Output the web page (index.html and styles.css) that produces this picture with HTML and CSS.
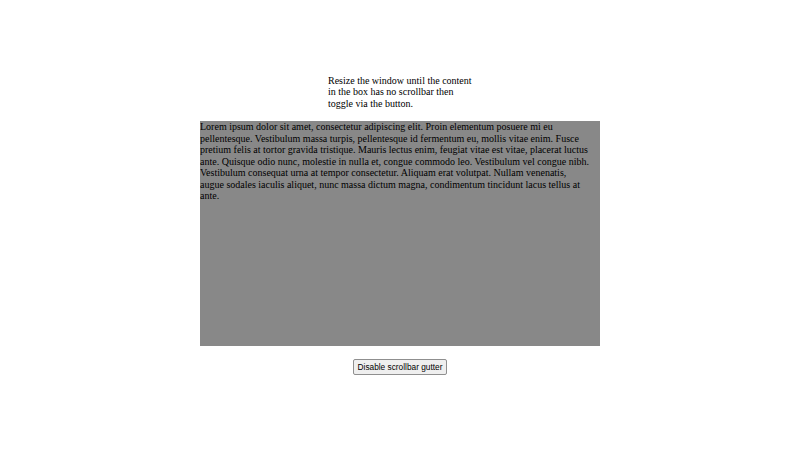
FILE: index.html
```html
<!DOCTYPE html>
<html>
<head>
<meta charset="utf-8">
<link rel="stylesheet" href="styles.css">
</head>
<body>
<main class="page">
  <p class="intro">Resize the window until the content in the box has no scrollbar then toggle via the button.</p>
  <div class="box">Lorem ipsum dolor sit amet, consectetur adipiscing elit. Proin elementum posuere mi eu pellentesque. Vestibulum massa turpis, pellentesque id fermentum eu, mollis vitae enim. Fusce pretium felis at tortor gravida tristique. Mauris lectus enim, feugiat vitae est vitae, placerat luctus ante. Quisque odio nunc, molestie in nulla et, congue commodo leo. Vestibulum vel congue nibh. Vestibulum consequat urna at tempor consectetur. Aliquam erat volutpat. Nullam venenatis, augue sodales iaculis aliquet, nunc massa dictum magna, condimentum tincidunt lacus tellus at ante.</div>
  <button class="toggle" type="button">Disable scrollbar gutter</button>
</main>
</body>
</html>
```
FILE: styles.css
```css
html, body {
  margin: 0;
  padding: 0;
  background: #fff;
}
.page {
  height: 450px;
  display: flex;
  flex-direction: column;
  align-items: center;
  justify-content: center;
  font-family: "Liberation Serif", "Times New Roman", serif;
  font-size: 10px;
  line-height: 11.5px;
  color: #000;
}
.intro {
  width: 144px;
  margin: 0 0 12px;
}
.box {
  width: 400px;
  height: 225px;
  background: #888888;
  overflow-y: auto;
  padding-right: 9px;
  box-sizing: border-box;
}
.toggle {
  margin-top: 13px;
  font-family: "Liberation Sans", Arial, sans-serif;
  font-size: 8.3px;
  height: 16px;
  padding: 0 4px;
  border: 1px solid #8f8f8f;
  border-radius: 2px;
  background: #efefef;
  color: #000;
}
```
